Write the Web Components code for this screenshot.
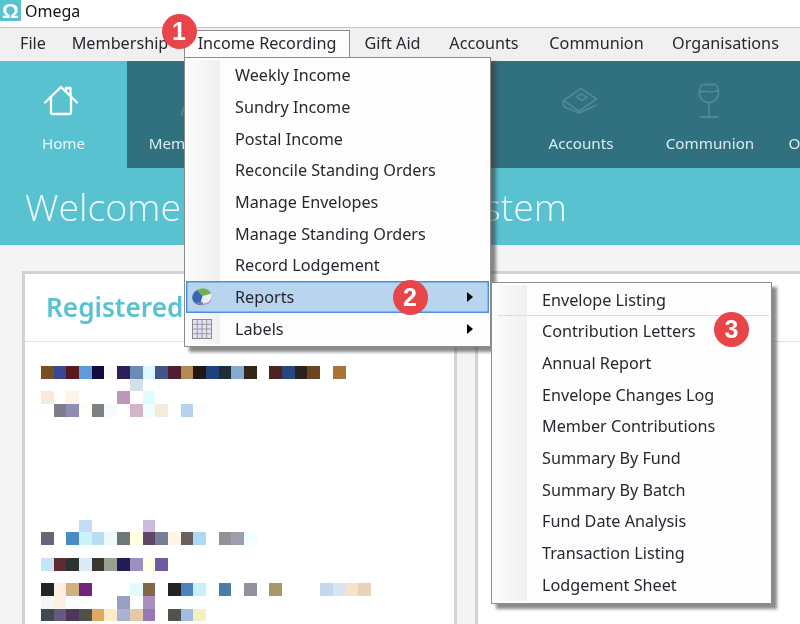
<!DOCTYPE html>
<html lang="en"><head><meta charset="utf-8"><title>Omega</title>
<style>
html,body{margin:0;padding:0;background:#fff}
body{font-family:"Noto Sans","Liberation Sans",sans-serif;color:#24222e}
</style></head><body>
<omega-app>
  <title-bar>Omega</title-bar>
  <menu-bar>
    <menu-entry w="54">File</menu-entry>
    <menu-entry w="124" pr="4">Membership</menu-entry>
    <menu-entry active w="166">Income Recording</menu-entry>
    <menu-entry w="85">Gift Aid</menu-entry>
    <menu-entry w="98">Accounts</menu-entry>
    <menu-entry w="127">Communion</menu-entry>
    <menu-entry w="131">Organisations</menu-entry>
  </menu-bar>
  <nav-bar>
    <nav-tab active icon="home" w="127">Home</nav-tab>
    <nav-tab icon="people" w="134">Membership</nav-tab>
    <nav-tab icon="coins" w="128">Income</nav-tab>
    <nav-tab icon="gift" w="128">Gift Aid</nav-tab>
    <nav-tab icon="book" w="128">Accounts</nav-tab>
    <nav-tab icon="wine" w="130">Communion</nav-tab>
    <nav-tab w="127">Organisations</nav-tab>
  </nav-bar>
  <welcome-band>Welcome to the Omega System</welcome-band>
  <dash-board>
    <dash-card heading="Registered Members" w="435">
      <pixel-mosaic cells="#774f22,#3a4696,#57191a,#5f9bd8,#100c3c,#fbfaf8,#301e5c,#6b8db5,#ddf7fd,#425488,#4f1e30,#b38a4f,#221812,#1e4180,#1f2d38,#85aacf,#32261c,,#4f2226,#27477e,#2a2420,#6e4420,,#a8743a|,,,,,,,#d5dfec|#f6eadd,,#fdf4e8,,,,#bc97b9,,#e0fdfd|,#7e7e8a,#8c8cb5,#fffdfa,#808080,#f6fbff,,#d3b5c9,#effeff,#f6eadd,,#b7d2ea,#fafcff"></pixel-mosaic>
      <pixel-mosaic style="margin-top:103px" cells=",,,#c4dcf8,,,,,#c9bcdc|#66667a,,#4a8ac6,#c8f4f8,#b8dff0,#eef9fd,#707578,#ffffe0,#5f4568,#767e98,#fdf6e6,#69605c,#aed8f8,,#929296,#9e9eae,#f0ffff||#c4e4fa,#5f2a30,#2a3434,#deeaf5,#3c3630,#9aa08f,#201c58,#9c90c0,#ffffe4,#6f5aa0||#1e2428,#fdf0e2,#d0b080,#742280,,,,#e4fbfd,#806848,#fcffff,#24221e,#4a84c0,#c8f0f8,,#4a7cac,,#90909e,,#a89868,,,,#c4d8ec,#d8e4f0,#f4e4cc,#e8d4b4|#f5f5f5,#fdf0e2,#fafcff,,,,#97a0c0,,#a890c0|#3e4a50,#645a80,#503658,#4e5248,#e0a860,#fdeccc,#a8b0d4,#e4c8a8,#9878b4,,#50524c,#a0bce0,#f4f0c0"></pixel-mosaic>
    </dash-card>
    <dash-card heading="" w="400"></dash-card>
  </dash-board>

  <pop-menu style="left:184px;top:57px;width:307px">
    <pop-item>Weekly Income</pop-item>
    <pop-item>Sundry Income</pop-item>
    <pop-item>Postal Income</pop-item>
    <pop-item>Reconcile Standing Orders</pop-item>
    <pop-item>Manage Envelopes</pop-item>
    <pop-item>Manage Standing Orders</pop-item>
    <pop-item>Record Lodgement</pop-item>
    <pop-item selected arrow icon="pie">Reports</pop-item>
    <pop-item arrow icon="grid">Labels</pop-item>
  </pop-menu>
  <pop-menu style="left:491px;top:282px;width:281px;padding-top:1px;padding-bottom:2px">
    <pop-item divider>Envelope Listing</pop-item>
    <pop-item>Contribution Letters</pop-item>
    <pop-item>Annual Report</pop-item>
    <pop-item>Envelope Changes Log</pop-item>
    <pop-item>Member Contributions</pop-item>
    <pop-item>Summary By Fund</pop-item>
    <pop-item>Summary By Batch</pop-item>
    <pop-item>Fund Date Analysis</pop-item>
    <pop-item>Transaction Listing</pop-item>
    <pop-item>Lodgement Sheet</pop-item>
  </pop-menu>
  <step-badge style="left:161.500px;top:13.500px">1</step-badge>
  <step-badge style="left:392.500px;top:280px">2</step-badge>
  <step-badge style="left:714px;top:312px">3</step-badge>
</omega-app>
<script>
const def=(name,css,html,init)=>{
  customElements.define(name,class extends HTMLElement{
    constructor(){super();this.attachShadow({mode:'open'})}
    connectedCallback(){
      this.shadowRoot.innerHTML='<style>'+css+'</style>'+(typeof html==='function'?html(this):html);
      if(init)init(this,this.shadowRoot);
    }
  });
};
const FONT='"Noto Sans","Liberation Sans",sans-serif';
def('omega-app',`:host{display:block;position:relative;width:800px;height:624px;overflow:hidden;background:#f4f4f4;font-family:${FONT};filter:blur(.3px)}`,'<slot></slot>');
def('title-bar',`:host{display:flex;align-items:flex-start;height:27px;background:#fff;border-bottom:1px solid #c4c4c4;font-size:16px;color:#111}
 .logo{width:21px;height:21px;background:#58c2d1;color:#fff;display:flex;align-items:center;justify-content:center;font:bold 21px "Liberation Sans",sans-serif;margin-right:4px}
 .t{line-height:22px}`,'<span class="logo">Ω</span><span class="t"><slot></slot></span>');
def('menu-bar',`:host{display:flex;height:33px;background:#f0f0f0;padding-left:6px}`,'<slot></slot>');
def('menu-entry',`:host{display:block;box-sizing:border-box;height:33px;padding-top:2px;font-size:16.200px;color:#2a2630}
 .i{box-sizing:border-box;height:27px;line-height:27px;text-align:center;white-space:nowrap}
 :host([active]){position:relative;z-index:5}
 :host([active]) .i{height:31px;line-height:25px;background:linear-gradient(#fff,#fafafa);border:1.5px solid #8c8c8c;border-bottom:0}`,
 '<div class="i"><slot></slot></div>',(h)=>{h.style.width=h.getAttribute('w')+'px';h.style.paddingRight=(h.getAttribute('pr')||0)+'px'});
const icons={
 home:'<svg width="41" height="31" viewBox="0 0 41 31" fill="none" stroke="#fff" stroke-width="2.300" stroke-linejoin="round" stroke-linecap="round"><path d="M2 17.500 18 2l16 15.500"/><path d="M8 13v14.500q0 1.500 1.500 1.500h17q1.500 0 1.500-1.500V13"/><path d="M23 6.500V3h4.500v8"/></svg>',
 people:'<svg width="40" height="34" viewBox="0 0 40 34" fill="none" stroke="#4f8796" stroke-width="2"><circle cx="20" cy="9" r="7"/><path d="M8 32c0-9 5-13 12-13s12 4 12 13"/></svg>',
 coins:'<svg width="36" height="34" viewBox="0 0 36 34" fill="none" stroke="#4f8796" stroke-width="2"><ellipse cx="18" cy="10" rx="12" ry="5"/><path d="M6 10v12c0 3 5 5 12 5s12-2 12-5V10"/></svg>',
 gift:'<svg width="36" height="34" viewBox="0 0 36 34" fill="none" stroke="#4f8796" stroke-width="2"><rect x="5" y="12" width="26" height="19"/><path d="M18 12v19M3 12h30"/></svg>',
 book:'<svg width="36" height="27" viewBox="0 0 36 27" fill="none" stroke="#4f8796" stroke-width="1.800" stroke-linejoin="round" style="margin-right:3px"><path d="M1.500 13.500 19 1.500 34.500 12 17 24z"/><path d="M1.500 13.500c-1 3 0 5 1 6.500L17 26l17.500-8"/><path d="M17 24c-1 1-1 1.500 0 2"/><path d="M14.500 10l5-3.300 5.500 3.500-5 3.300z"/></svg>',
 wine:'<svg width="22" height="35" viewBox="0 0 22 35" fill="none" stroke="#4f8796" stroke-width="1.800" stroke-linecap="round" style="margin-right:2px"><path d="M5 1.500h12c2 1 3.500 4 3.500 8 0 6-4 10-9.500 10S1.500 15.500 1.500 9.500c0-4 1.500-7 3.500-8z"/><path d="M2 9c5-2.500 8 2 18-1.500"/><path d="M11 19.500V33M2.500 34h17"/></svg>'
};
def('nav-bar',`:host{display:flex;height:107px;background:#31717f;overflow:hidden}`,'<slot></slot>');
def('nav-tab',`:host{display:flex;flex:none;flex-direction:column;align-items:center;box-sizing:border-box;color:#d9edf1;font-size:15.200px;white-space:nowrap;padding:0 14px}
 :host([active]){background:#58c2d1;color:#eaf8fa}
 .ic{height:34px;margin-top:22.500px;display:flex;align-items:center;justify-content:center}
 .l{margin-top:15.500px;line-height:20px}`,
 h=>`<div class="ic">${icons[h.getAttribute('icon')]||''}</div><div class="l"><slot></slot></div>`,
 h=>{h.style.width=h.getAttribute('w')+'px'});
def('welcome-band',`:host{display:block;box-sizing:border-box;height:77px;background:#58c2d1;color:#eef9fb;font-family:"Open Sans",sans-serif;font-weight:300;font-size:37.500px;word-spacing:3.500px;line-height:78px;padding-left:25px;white-space:nowrap}`,'<slot></slot>');
def('dash-board',`:host{display:flex;gap:18px;padding:26px 0 0 22px;height:379px;box-sizing:border-box;overflow:hidden}`,'<slot></slot>');
def('dash-card',`:host{display:block;flex:none;box-sizing:border-box;height:420px;background:#fff;border:3px solid #d2d2d2}
 .h{box-sizing:border-box;height:68px;padding:15px 0 0 21px;color:#58c2d1;font-size:26.200px;font-weight:600;line-height:36px;border-bottom:1px solid #e2e2e2;white-space:nowrap}
 .b{padding:24px 0 0 16px}`,
 h=>`<div class="h">${h.getAttribute('heading')||''}</div><div class="b"><slot></slot></div>`,
 h=>{h.style.width=h.getAttribute('w')+'px'});
def('pixel-mosaic',`:host{display:block}
 .r{display:flex;height:12.7px}.c{width:12.7px;flex:none}`,
 h=>h.getAttribute('cells').split('|').map(r=>'<div class="r">'+r.split(',').map(c=>`<div class="c" style="background:${c||'transparent'}"></div>`).join('')+'</div>').join(''));
def('pop-menu',`:host{display:block;position:absolute;box-sizing:border-box;background:#fdfdfd;border:1.5px solid #8c8c8c;padding:1.500px 1px;box-shadow:5px 5px 3px rgba(60,60,60,.6);z-index:6}`,
 '<div style="position:absolute;left:3px;top:2px;bottom:2px;width:31.500px;background:linear-gradient(90deg,#fbfbfb,#f0f0f0)"></div><slot></slot>');
const pi={
 pie:'<svg width="20" height="18" viewBox="0 0 20 18"><ellipse cx="10" cy="9.800" rx="9.800" ry="7.800" fill="#a9a9bf"/><ellipse cx="10.500" cy="8.500" rx="9" ry="7" fill="#eeeef6"/><path d="M10.500 8 5 2c1.500-1 3.500-1.500 5.500-1.500 4 0 7.500 2 8.500 5z" fill="#6cb44a"/><path d="M5 2 10.500 8 8 17C3.500 16.500.3 13.500.3 9.500.3 6.500 2 3.500 5 2z" fill="#3566b8"/><path d="M3 14.500C5 16 7 17 10 17.300l1-3C8 14 5 14 3 14.500z" fill="#6d7fb8"/></svg>',
 grid:'<svg width="20" height="20" viewBox="0 0 20 20"><rect x=".5" y=".5" width="19" height="19" fill="#e2e2f6" stroke="#8a8a8a"/><path d="M5.300 .5v19M10 .5v19M14.700 .5v19M.5 5.300h19M.5 10h19M.5 14.700h19" stroke="#9a9a9a" fill="none"/></svg>'
};
def('pop-item',`:host{display:flex;align-items:center;position:relative;box-sizing:border-box;height:31.67px;padding-left:49px;font-size:16.200px;color:#2a2630;white-space:nowrap}
 :host([selected]){background:#b8d4ee;box-shadow:inset 0 0 0 1.400px #4a90d9}
 :host([divider])::after{content:"";position:absolute;left:5px;right:1px;bottom:0;height:1px;background:#d4dee4}
 .ic{position:absolute;left:6px;top:50%;transform:translateY(-50%);display:flex}
 .ar{position:absolute;right:16px;top:50%;margin-top:-5px;border-left:6.500px solid #000;border-top:5px solid transparent;border-bottom:5px solid transparent}`,
 h=>`${h.hasAttribute('icon')?`<span class="ic">${pi[h.getAttribute('icon')]}</span>`:''}<slot></slot>${h.hasAttribute('arrow')?'<span class="ar"></span>':''}`);
def('step-badge',`:host{display:flex;position:absolute;width:35px;height:35px;border-radius:50%;background:#e84549;color:#fff;align-items:center;justify-content:center;font:bold 25px "Liberation Sans",sans-serif;z-index:8}`,'<slot></slot>');
</script>
</body></html>
